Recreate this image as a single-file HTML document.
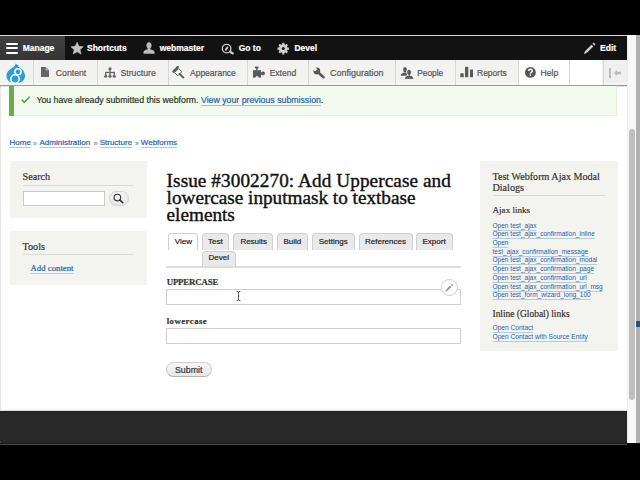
<!DOCTYPE html><html><head><meta charset="utf-8"><style>
html,body{margin:0;padding:0;width:640px;height:480px;overflow:hidden;background:#000;}
.t{position:absolute;white-space:nowrap;-webkit-text-stroke:0.2px currentColor;}
.b{position:absolute;box-sizing:border-box;}
svg{position:absolute;overflow:visible;}
</style></head><body>
<div class="b" style="left:0px;top:36px;width:627px;height:407px;background:#fff;"></div>
<div class="b" style="left:0px;top:86px;width:1px;height:325px;background:#e6e6e6;"></div>
<div class="b" style="left:0px;top:35px;width:636px;height:1px;background:#d9d9d9;"></div>
<div class="b" style="left:627px;top:35px;width:9px;height:408px;background:#f8f8f8;border-left:1px solid #ececec;"></div>
<div class="b" style="left:628.8px;top:129px;width:5.800000000000068px;height:271px;background:#bebebe;border-radius:3px;"></div>
<div class="b" style="left:636px;top:35px;width:4px;height:408px;background:#b0b0b0;"></div>
<div class="b" style="left:636px;top:321px;width:4px;height:6px;background:#23508a;"></div>
<div class="b" style="left:0px;top:36px;width:627px;height:24px;background:#121212;"></div>
<div class="b" style="left:0px;top:36px;width:65px;height:24px;background:linear-gradient(#404040,#353535);"></div>
<div class="b" style="left:5.5px;top:42.5px;width:12.5px;height:2.2px;background:#fff;border-radius:1px;"></div>
<div class="b" style="left:5.5px;top:47px;width:12.5px;height:2.2px;background:#fff;border-radius:1px;"></div>
<div class="b" style="left:5.5px;top:51.5px;width:12.5px;height:2.2px;background:#fff;border-radius:1px;"></div>
<div class="t" style="left:22.70px;top:44.30px;font-size:8.5px;line-height:8.5px;font-family:'Liberation Sans', sans-serif;font-weight:bold;color:#fff;">Manage</div>
<svg style="left:66px;top:38px" width="24" height="20" viewBox="0 0 24 20"><path d="M11.1 4.2 L12.9 8.3 L17.2 8.8 L14 11.7 L15 16 L11.1 13.8 L7.2 16 L8.2 11.7 L5 8.8 L9.3 8.3z" fill="#c4c4c4" stroke="#c4c4c4" stroke-width="0.6" stroke-linejoin="round"/></svg>
<div class="t" style="left:87.00px;top:44.30px;font-size:8.5px;line-height:8.5px;font-family:'Liberation Sans', sans-serif;font-weight:bold;color:#fff;">Shortcuts</div>
<svg style="left:143px;top:42px" width="12" height="12" viewBox="0 0 24 24"><path d="M12 0.5c3.3 0 5.2 2.8 5.2 6.2 0 2.7-1.1 5-2.6 6.1v1.6c3.8 1 8.2 2.8 8.4 5.2V23.5H1v-3.9c0.2-2.4 4.6-4.2 8.4-5.2v-1.6C7.9 11.7 6.8 9.400 6.8 6.700 6.8 3.300 8.700 0.5 12 0.5z" fill="#bbb"/></svg>
<div class="t" style="left:159.75px;top:44.30px;font-size:8.5px;line-height:8.5px;font-family:'Liberation Sans', sans-serif;font-weight:bold;color:#fff;">webmaster</div>
<svg style="left:216px;top:38px" width="24" height="20" viewBox="0 0 24 20"><circle cx="10.6" cy="10.6" r="4.3" fill="none" stroke="#c8c8c8" stroke-width="1.3"/><ellipse cx="10.6" cy="10.6" rx="1.1" ry="2.5" transform="rotate(35 10.6 10.6)" fill="#c8c8c8"/><path d="M14.2 13.8 L16.8 15.4" stroke="#c8c8c8" stroke-width="2.3" stroke-linecap="round"/></svg>
<div class="t" style="left:238.70px;top:44.30px;font-size:8.5px;line-height:8.5px;font-family:'Liberation Sans', sans-serif;font-weight:bold;color:#fff;">Go to</div>
<svg style="left:272px;top:38px" width="24" height="20" viewBox="0 0 24 20"><g fill="#cfcfcf"><circle cx="11.25" cy="10.6" r="4.3"/><rect x="10.2" y="4.8" width="2.1" height="2.5" rx="0.5" transform="rotate(0 11.25 10.6)"/><rect x="10.2" y="4.8" width="2.1" height="2.5" rx="0.5" transform="rotate(45 11.25 10.6)"/><rect x="10.2" y="4.8" width="2.1" height="2.5" rx="0.5" transform="rotate(90 11.25 10.6)"/><rect x="10.2" y="4.8" width="2.1" height="2.5" rx="0.5" transform="rotate(135 11.25 10.6)"/><rect x="10.2" y="4.8" width="2.1" height="2.5" rx="0.5" transform="rotate(180 11.25 10.6)"/><rect x="10.2" y="4.8" width="2.1" height="2.5" rx="0.5" transform="rotate(225 11.25 10.6)"/><rect x="10.2" y="4.8" width="2.1" height="2.5" rx="0.5" transform="rotate(270 11.25 10.6)"/><rect x="10.2" y="4.8" width="2.1" height="2.5" rx="0.5" transform="rotate(315 11.25 10.6)"/></g><circle cx="11.25" cy="10.6" r="1.5" fill="#121212"/></svg>
<div class="t" style="left:294.40px;top:44.30px;font-size:8.5px;line-height:8.5px;font-family:'Liberation Sans', sans-serif;font-weight:bold;color:#fff;">Devel</div>
<svg style="left:580px;top:40px" width="20" height="18" viewBox="0 0 20 18"><path d="M5.8 12.2 L12.4 5.6" stroke="#cfcfcf" stroke-width="2.6"/><path d="M13.4 4.6 L14.6 3.4" stroke="#cfcfcf" stroke-width="2.6"/><path d="M4.9 11.3 L6.7 13.1 L4 14z" fill="#cfcfcf"/></svg>
<div class="t" style="left:600.10px;top:44.30px;font-size:8.5px;line-height:8.5px;font-family:'Liberation Sans', sans-serif;font-weight:bold;color:#fff;">Edit</div>
<div class="b" style="left:0px;top:60px;width:627px;height:25px;background:#f2f2f0;"></div>
<div class="b" style="left:518px;top:60px;width:84px;height:25px;background:#fff;"></div>
<div class="b" style="left:602px;top:60px;width:25px;height:25px;background:#efefef;"></div>
<div class="b" style="left:0px;top:83px;width:627px;height:1px;background:rgba(255,255,255,0.6);"></div>
<div class="b" style="left:0px;top:84.6px;width:627px;height:1.4000000000000057px;background:#9c9c9a;"></div>
<div class="b" style="left:0px;top:86px;width:627px;height:1px;background:rgba(0,0,0,0.12);"></div>
<div class="b" style="left:33.4px;top:60px;width:1px;height:25px;background:#d8d8d6;"></div>
<div class="b" style="left:97.2px;top:60px;width:1px;height:25px;background:#d8d8d6;"></div>
<div class="b" style="left:168.2px;top:60px;width:1px;height:25px;background:#d8d8d6;"></div>
<div class="b" style="left:246.7px;top:60px;width:1px;height:25px;background:#d8d8d6;"></div>
<div class="b" style="left:308.2px;top:60px;width:1px;height:25px;background:#d8d8d6;"></div>
<div class="b" style="left:395px;top:60px;width:1px;height:25px;background:#d8d8d6;"></div>
<div class="b" style="left:454.5px;top:60px;width:1px;height:25px;background:#d8d8d6;"></div>
<div class="b" style="left:518.4px;top:60px;width:1px;height:25px;background:#d8d8d6;"></div>
<div class="b" style="left:569.4px;top:60px;width:1px;height:25px;background:#d8d8d6;"></div>
<div class="b" style="left:602.6px;top:60px;width:1px;height:25px;background:#d8d8d6;"></div>
<svg style="left:6px;top:62.5px" width="19.5" height="21" viewBox="0 0 39 42"><path d="M19.5 1.2 C21 3 23.5 4.2 25.5 5 L24 7.2 C31 10.5 38 16.5 38 26 C38 35 30 40.5 19.5 40.5 C9 40.5 1 35 1 26 C1 17 8 12.5 13 9.5 C16.5 7.5 19 5 19.5 1.2z" fill="#2a9fd8"/><circle cx="18" cy="32" r="8.4" fill="#2a9fd8" stroke="#fff" stroke-width="3.2"/><circle cx="24" cy="17.6" r="6.2" fill="#2a9fd8" stroke="#fff" stroke-width="3"/></svg>
<svg style="left:41px;top:67px" width="8" height="10" viewBox="0 0 8 10"><path d="M0 0 H5 L8 3 V10 H0z" fill="#666"/><path d="M5.2 0.3 V2.8 H7.7" fill="none" stroke="#f2f2f0" stroke-width="0.7"/></svg>
<div class="t" style="left:55.80px;top:68.51px;font-size:8.7px;line-height:8.7px;font-family:'Liberation Sans', sans-serif;font-weight:normal;color:#555;">Content</div>
<svg style="left:103.75px;top:67px" width="12" height="11" viewBox="0 0 24 22"><g fill="#666"><circle cx="12" cy="3.5" r="3.2"/><circle cx="3.5" cy="18.5" r="3.2"/><circle cx="12" cy="18.5" r="3.2"/><circle cx="20.5" cy="18.5" r="3.2"/><rect x="10.7" y="3" width="2.6" height="15"/><rect x="2.2" y="9.7" width="19.6" height="2.6"/><rect x="2.2" y="9.7" width="2.6" height="9"/><rect x="19.2" y="9.7" width="2.6" height="9"/></g></svg>
<div class="t" style="left:120.50px;top:68.51px;font-size:8.7px;line-height:8.7px;font-family:'Liberation Sans', sans-serif;font-weight:normal;color:#555;">Structure</div>
<svg style="left:170px;top:62px" width="20" height="20" viewBox="0 0 20 20"><path d="M4.6 10.6 L8.6 6.6 L11.8 9.8 L7.8 13.8z" fill="#fff" stroke="#5a5a5a" stroke-width="1"/><path d="M3.4 9.6 L7.8 5.2" stroke="#5a5a5a" stroke-width="2.4" stroke-linecap="round"/><path d="M9.6 12 L13.4 15.6" stroke="#5a5a5a" stroke-width="1.9" stroke-linecap="round"/></svg>
<div class="t" style="left:190.00px;top:68.51px;font-size:8.5px;line-height:8.5px;font-family:'Liberation Sans', sans-serif;font-weight:normal;color:#555;">Appearance</div>
<svg style="left:250px;top:62px" width="20" height="20" viewBox="0 0 20 20"><g fill="#5a5a5a"><rect x="5" y="4.6" width="3.6" height="1.8" rx="0.6"/><rect x="6.1" y="5.5" width="1.4" height="3"/><rect x="3" y="8.2" width="8" height="7.4"/><circle cx="13" cy="11.4" r="1.9"/><rect x="10.5" y="10.6" width="2" height="1.6"/></g><circle cx="7" cy="15.6" r="1.5" fill="#f2f2f0"/></svg>
<div class="t" style="left:269.70px;top:68.51px;font-size:8.5px;line-height:8.5px;font-family:'Liberation Sans', sans-serif;font-weight:normal;color:#555;">Extend</div>
<svg style="left:310px;top:62px" width="20" height="20" viewBox="0 0 20 20"><circle cx="6.8" cy="9" r="3.4" fill="#5a5a5a"/><circle cx="5" cy="7.2" r="1.7" fill="#f2f2f0"/><path d="M3.6 5.8 L6 8.2" stroke="#f2f2f0" stroke-width="2.2"/><path d="M8 10.2 L13.5 15.2" stroke="#5a5a5a" stroke-width="2.6" stroke-linecap="round"/></svg>
<div class="t" style="left:330.00px;top:68.51px;font-size:9px;line-height:9px;font-family:'Liberation Sans', sans-serif;font-weight:normal;color:#555;">Configuration</div>
<svg style="left:398px;top:62px" width="20" height="20" viewBox="0 0 20 20"><g fill="#5a5a5a"><ellipse cx="7" cy="7.6" rx="1.9" ry="2.7"/><path d="M2.6 13.8 C2.8 11.6 4.6 10.6 7 10.4 C8 10.4 8.6 10.6 9 10.8 V13.8z"/></g><g fill="#5a5a5a" stroke="#f2f2f0" stroke-width="0.8"><path d="M6.4 17.3 C6.6 14.6 8.6 13.4 10.4 13.2 C9.2 12.4 8.8 11.4 8.8 10.2 C8.8 8.4 9.8 7.4 11.1 7.4 C12.4 7.4 13.4 8.4 13.4 10.2 C13.4 11.4 13 12.4 11.8 13.2 C13.6 13.4 15.6 14.6 15.8 17.3z"/></g></svg>
<div class="t" style="left:417.20px;top:68.51px;font-size:8.4px;line-height:8.4px;font-family:'Liberation Sans', sans-serif;font-weight:normal;color:#555;">People</div>
<svg style="left:456px;top:62px" width="20" height="20" viewBox="0 0 20 20"><g fill="#5a5a5a"><rect x="4.3" y="11.3" width="3.4" height="4" rx="0.5"/><rect x="9" y="4.8" width="3.3" height="10.5" rx="0.5"/><rect x="14" y="7.5" width="3" height="7.8" rx="0.5"/></g></svg>
<div class="t" style="left:477.00px;top:68.51px;font-size:8.5px;line-height:8.5px;font-family:'Liberation Sans', sans-serif;font-weight:normal;color:#555;">Reports</div>
<svg style="left:524.6px;top:67.4px" width="10.8" height="10.8" viewBox="0 0 20 20"><circle cx="10" cy="10" r="10" fill="#555"/><path d="M6.6 7.6 C6.6 5.2 8.2 4.2 10.1 4.2 C12.1 4.2 13.5 5.5 13.5 7.2 C13.5 9.6 10.1 9.6 10.1 12.2" fill="none" stroke="#fff" stroke-width="2.7"/><rect x="8.7" y="13.6" width="2.8" height="2.7" fill="#fff"/></svg>
<div class="t" style="left:540.50px;top:68.51px;font-size:8.7px;line-height:8.7px;font-family:'Liberation Sans', sans-serif;font-weight:normal;color:#555;">Help</div>
<div class="b" style="left:608.8px;top:68px;width:2.2000000000000455px;height:9.5px;background:#bbb;"></div>
<svg style="left:614px;top:69.5px" width="7" height="6" viewBox="0 0 14 12"><path d="M0 6 L6 0 V3.5 H14 V8.5 H6 V12z" fill="#bbb"/></svg>
<div class="b" style="left:9px;top:86px;width:608px;height:30px;background:#f3f9ef;border:1px solid #e6eedd;border-top:none;"></div>
<div class="b" style="left:9px;top:86px;width:5px;height:30px;background:#6aab4c;"></div>
<svg style="left:21px;top:96px" width="9.5" height="7.5" viewBox="0 0 19 15"><path d="M1.5 7.5 L6.5 12.5 L17.5 1.5" fill="none" stroke="#5aa33c" stroke-width="3.4"/></svg>
<div class="t" style="left:36.40px;top:95.70px;font-size:8.75px;line-height:8.75px;font-family:'Liberation Sans', sans-serif;font-weight:normal;color:#283a24;">You have already submitted this webform. <span style="color:#2a61a6;text-decoration:underline;text-decoration-color:#9fbcd6;text-decoration-thickness:1px;text-underline-offset:1.5px;">View your previous submission</span>.</div>
<div class="t" style="left:9.50px;top:139.10px;font-size:8px;line-height:8px;font-family:'Liberation Sans', sans-serif;font-weight:normal;color:#2a61a6;"><span style="text-decoration:underline;text-decoration-color:#b3cbe0;text-decoration-thickness:1px;text-underline-offset:2px;">Home</span></div>
<div class="t" style="left:39.50px;top:139.10px;font-size:8px;line-height:8px;font-family:'Liberation Sans', sans-serif;font-weight:normal;color:#2a61a6;"><span style="text-decoration:underline;text-decoration-color:#b3cbe0;text-decoration-thickness:1px;text-underline-offset:2px;">Administration</span></div>
<div class="t" style="left:99.70px;top:139.10px;font-size:8px;line-height:8px;font-family:'Liberation Sans', sans-serif;font-weight:normal;color:#2a61a6;"><span style="text-decoration:underline;text-decoration-color:#b3cbe0;text-decoration-thickness:1px;text-underline-offset:2px;">Structure</span></div>
<div class="t" style="left:140.80px;top:139.10px;font-size:8px;line-height:8px;font-family:'Liberation Sans', sans-serif;font-weight:normal;color:#2a61a6;"><span style="text-decoration:underline;text-decoration-color:#b3cbe0;text-decoration-thickness:1px;text-underline-offset:2px;">Webforms</span></div>
<div class="t" style="left:33.00px;top:139.81px;font-size:7px;line-height:7px;font-family:'Liberation Sans', sans-serif;font-weight:normal;color:#999;">»</div>
<div class="t" style="left:93.60px;top:139.81px;font-size:7px;line-height:7px;font-family:'Liberation Sans', sans-serif;font-weight:normal;color:#999;">»</div>
<div class="t" style="left:135.00px;top:139.81px;font-size:7px;line-height:7px;font-family:'Liberation Sans', sans-serif;font-weight:normal;color:#999;">»</div>
<div class="b" style="left:9.5px;top:161px;width:137.5px;height:57px;background:#f3f4ef;"></div>
<div class="t" style="left:22.50px;top:171.82px;font-size:10.2px;line-height:10.2px;font-family:'Liberation Serif', serif;font-weight:normal;color:#333;">Search</div>
<div class="b" style="left:22.5px;top:184.5px;width:111.5px;height:1.0px;background:#d9dad3;"></div>
<div class="b" style="left:22.5px;top:191px;width:82.1px;height:15.300000000000011px;background:#fff;border:1px solid #c9c9c9;"></div>
<div class="b" style="left:108.5px;top:191.3px;width:20.5px;height:15.199999999999989px;background:linear-gradient(#f3f3f3,#e6e6e6);border:1px solid #d2d2d2;border-radius:8px;"></div>
<svg style="left:104px;top:188px" width="30" height="22" viewBox="0 0 30 22"><circle cx="13.4" cy="9.6" r="3.3" fill="none" stroke="#333" stroke-width="1.1"/><path d="M15.9 12.1 L18.7 14.6" stroke="#333" stroke-width="1.6" stroke-linecap="round"/></svg>
<div class="b" style="left:9.5px;top:230.5px;width:137.5px;height:54.5px;background:#f3f4ef;"></div>
<div class="t" style="left:22.50px;top:241.50px;font-size:10.2px;line-height:10.2px;font-family:'Liberation Serif', serif;font-weight:normal;color:#333;">Tools</div>
<div class="b" style="left:22.5px;top:253.8px;width:111.5px;height:1.0px;background:#d9dad3;"></div>
<div class="t" style="left:30.50px;top:264.00px;font-size:8.75px;line-height:8.75px;font-family:'Liberation Serif', serif;font-weight:normal;color:#2a61a6;"><span style="text-decoration:underline;text-decoration-color:#b3cbe0;text-decoration-thickness:1px;text-underline-offset:2px;">Add content</span></div>
<div class="t" style="left:166.60px;top:171.22px;font-size:19.2px;line-height:19.2px;font-family:'Liberation Serif', serif;font-weight:normal;color:#111;-webkit-text-stroke:0.4px #111;letter-spacing:0.09px;">Issue #3002270: Add Uppercase and</div>
<div class="t" style="left:166.60px;top:188.31px;font-size:19.2px;line-height:19.2px;font-family:'Liberation Serif', serif;font-weight:normal;color:#111;-webkit-text-stroke:0.4px #111;">lowercase inputmask to textbase</div>
<div class="t" style="left:166.60px;top:204.72px;font-size:19.2px;line-height:19.2px;font-family:'Liberation Serif', serif;font-weight:normal;color:#111;-webkit-text-stroke:0.4px #111;">elements</div>
<div class="b" style="left:168.1px;top:233.25px;width:30.400000000000006px;height:16.75px;background:#fff;border:1px solid #cfcfcf;border-bottom:none;border-radius:4px 4px 0 0;"></div>
<div class="b" style="left:201.9px;top:233.25px;width:27.5px;height:16.75px;background:#e9e9e9;border:1px solid #cfcfcf;border-bottom:none;border-radius:4px 4px 0 0;"></div>
<div class="b" style="left:233.4px;top:233.25px;width:39.99999999999997px;height:16.75px;background:#e9e9e9;border:1px solid #cfcfcf;border-bottom:none;border-radius:4px 4px 0 0;"></div>
<div class="b" style="left:276.6px;top:233.25px;width:31.899999999999977px;height:16.75px;background:#e9e9e9;border:1px solid #cfcfcf;border-bottom:none;border-radius:4px 4px 0 0;"></div>
<div class="b" style="left:312px;top:233.25px;width:43px;height:16.75px;background:#e9e9e9;border:1px solid #cfcfcf;border-bottom:none;border-radius:4px 4px 0 0;"></div>
<div class="b" style="left:358.75px;top:233.25px;width:53.75px;height:16.75px;background:#e9e9e9;border:1px solid #cfcfcf;border-bottom:none;border-radius:4px 4px 0 0;"></div>
<div class="b" style="left:415.75px;top:233.25px;width:37.14999999999998px;height:16.75px;background:#e9e9e9;border:1px solid #cfcfcf;border-bottom:none;border-radius:4px 4px 0 0;"></div>
<div class="b" style="left:201.9px;top:250.5px;width:33.69999999999999px;height:16.5px;background:#e9e9e9;border:1px solid #cfcfcf;border-bottom:none;border-radius:4px 4px 0 0;"></div>
<div class="b" style="left:166px;top:266.2px;width:294.8px;height:2.0px;background:#dcdcdc;"></div>
<div class="t" style="left:174.75px;top:238.01px;font-size:8px;line-height:8px;font-family:'Liberation Sans', sans-serif;font-weight:normal;color:#222;">View</div>
<div class="t" style="left:208.00px;top:238.01px;font-size:8px;line-height:8px;font-family:'Liberation Sans', sans-serif;font-weight:normal;color:#222;">Test</div>
<div class="t" style="left:240.40px;top:238.01px;font-size:8px;line-height:8px;font-family:'Liberation Sans', sans-serif;font-weight:normal;color:#222;">Results</div>
<div class="t" style="left:283.50px;top:238.01px;font-size:8px;line-height:8px;font-family:'Liberation Sans', sans-serif;font-weight:normal;color:#222;">Build</div>
<div class="t" style="left:318.75px;top:238.01px;font-size:8px;line-height:8px;font-family:'Liberation Sans', sans-serif;font-weight:normal;color:#222;">Settings</div>
<div class="t" style="left:365.00px;top:238.01px;font-size:8px;line-height:8px;font-family:'Liberation Sans', sans-serif;font-weight:normal;color:#222;">References</div>
<div class="t" style="left:422.50px;top:238.01px;font-size:8px;line-height:8px;font-family:'Liberation Sans', sans-serif;font-weight:normal;color:#222;">Export</div>
<div class="t" style="left:208.50px;top:254.31px;font-size:8px;line-height:8px;font-family:'Liberation Sans', sans-serif;font-weight:normal;color:#222;">Devel</div>
<div class="t" style="left:166.70px;top:277.71px;font-size:8.8px;line-height:8.8px;font-family:'Liberation Serif', serif;font-weight:bold;color:#333;letter-spacing:-0.15px;">UPPERCASE</div>
<div class="b" style="left:166.2px;top:289.2px;width:294.6px;height:15.800000000000011px;background:#fff;border:1px solid #d0d0d0;"></div>
<div class="t" style="left:166.70px;top:317.21px;font-size:8.8px;line-height:8.8px;font-family:'Liberation Serif', serif;font-weight:bold;color:#333;letter-spacing:0.45px;">lowercase</div>
<div class="b" style="left:166.2px;top:328.3px;width:294.6px;height:15.899999999999977px;background:#fff;border:1px solid #d0d0d0;"></div>
<div class="b" style="left:441px;top:279.3px;width:17px;height:17px;border-radius:50%;background:#fff;border:1px solid #cfcfcf;"></div>
<svg style="left:444px;top:283px" width="10" height="10" viewBox="0 0 20 20"><path d="M4.2 15.8 L13.4 6.6" stroke="#9a9a9a" stroke-width="4"/><path d="M15 5 L17 3" stroke="#9a9a9a" stroke-width="4"/><path d="M2.2 17.8 L3.4 16.6" stroke="#aaa" stroke-width="1.4"/></svg>
<svg style="left:235.7px;top:291px" width="5" height="10" viewBox="0 0 10 20"><path d="M1 1 H4 L5 2 L6 1 H9 M5 2 V18 M1 19 H4 L5 18 L6 19 H9 M3.5 10 H6.5" fill="none" stroke="#333" stroke-width="1.5"/></svg>
<div class="b" style="left:166.1px;top:362px;width:45.599999999999994px;height:14.600000000000023px;background:linear-gradient(#f7f7f7,#e6e6e6);border:1px solid #d0d0d0;border-bottom-color:#b4b4b4;border-radius:8px;"></div>
<div class="t" style="left:175.00px;top:365.60px;font-size:8.8px;line-height:8.8px;font-family:'Liberation Sans', sans-serif;font-weight:normal;color:#333;">Submit</div>
<div class="b" style="left:479.5px;top:160.5px;width:138.0px;height:190.3px;background:#f3f4ef;"></div>
<div class="t" style="left:492.50px;top:172.01px;font-size:10.1px;line-height:10.1px;font-family:'Liberation Serif', serif;font-weight:normal;color:#333;">Test Webform Ajax Modal</div>
<div class="t" style="left:492.50px;top:182.51px;font-size:10.1px;line-height:10.1px;font-family:'Liberation Serif', serif;font-weight:normal;color:#333;">Dialogs</div>
<div class="b" style="left:492.5px;top:194.5px;width:112.0px;height:1.0px;background:#d9dad3;"></div>
<div class="t" style="left:492.50px;top:206.00px;font-size:9.1px;line-height:9.1px;font-family:'Liberation Serif', serif;font-weight:normal;color:#333;">Ajax links</div>
<div class="t" style="left:492.50px;top:222.71px;font-size:6.55px;line-height:6.55px;font-family:'Liberation Sans', sans-serif;font-weight:normal;color:#2a61a6;-webkit-text-stroke:0;"><span style="text-decoration:underline;text-decoration-color:#b3cbe0;text-decoration-thickness:1px;text-underline-offset:2px;">Open test_ajax</span></div>
<div class="t" style="left:492.50px;top:231.31px;font-size:6.55px;line-height:6.55px;font-family:'Liberation Sans', sans-serif;font-weight:normal;color:#2a61a6;-webkit-text-stroke:0;"><span style="text-decoration:underline;text-decoration-color:#b3cbe0;text-decoration-thickness:1px;text-underline-offset:2px;">Open test_ajax_confirmation_inline</span></div>
<div class="t" style="left:492.50px;top:240.00px;font-size:6.55px;line-height:6.55px;font-family:'Liberation Sans', sans-serif;font-weight:normal;color:#2a61a6;-webkit-text-stroke:0;"><span style="text-decoration:underline;text-decoration-color:#b3cbe0;text-decoration-thickness:1px;text-underline-offset:2px;">Open</span></div>
<div class="t" style="left:492.50px;top:248.71px;font-size:6.55px;line-height:6.55px;font-family:'Liberation Sans', sans-serif;font-weight:normal;color:#2a61a6;-webkit-text-stroke:0;"><span style="text-decoration:underline;text-decoration-color:#b3cbe0;text-decoration-thickness:1px;text-underline-offset:2px;">test_ajax_confirmation_message</span></div>
<div class="t" style="left:492.50px;top:257.41px;font-size:6.55px;line-height:6.55px;font-family:'Liberation Sans', sans-serif;font-weight:normal;color:#2a61a6;-webkit-text-stroke:0;"><span style="text-decoration:underline;text-decoration-color:#b3cbe0;text-decoration-thickness:1px;text-underline-offset:2px;">Open test_ajax_confirmation_modal</span></div>
<div class="t" style="left:492.50px;top:266.00px;font-size:6.55px;line-height:6.55px;font-family:'Liberation Sans', sans-serif;font-weight:normal;color:#2a61a6;-webkit-text-stroke:0;"><span style="text-decoration:underline;text-decoration-color:#b3cbe0;text-decoration-thickness:1px;text-underline-offset:2px;">Open test_ajax_confirmation_page</span></div>
<div class="t" style="left:492.50px;top:274.81px;font-size:6.55px;line-height:6.55px;font-family:'Liberation Sans', sans-serif;font-weight:normal;color:#2a61a6;-webkit-text-stroke:0;"><span style="text-decoration:underline;text-decoration-color:#b3cbe0;text-decoration-thickness:1px;text-underline-offset:2px;">Open test_ajax_confirmation_url</span></div>
<div class="t" style="left:492.50px;top:283.50px;font-size:6.55px;line-height:6.55px;font-family:'Liberation Sans', sans-serif;font-weight:normal;color:#2a61a6;-webkit-text-stroke:0;"><span style="text-decoration:underline;text-decoration-color:#b3cbe0;text-decoration-thickness:1px;text-underline-offset:2px;">Open test_ajax_confirmation_url_msg</span></div>
<div class="t" style="left:492.50px;top:292.00px;font-size:6.55px;line-height:6.55px;font-family:'Liberation Sans', sans-serif;font-weight:normal;color:#2a61a6;-webkit-text-stroke:0;"><span style="text-decoration:underline;text-decoration-color:#b3cbe0;text-decoration-thickness:1px;text-underline-offset:2px;">Open test_form_wizard_long_100</span></div>
<div class="t" style="left:492.50px;top:309.60px;font-size:9.45px;line-height:9.45px;font-family:'Liberation Serif', serif;font-weight:normal;color:#333;">Inline (Global) links</div>
<div class="t" style="left:492.50px;top:325.30px;font-size:6.6px;line-height:6.6px;font-family:'Liberation Sans', sans-serif;font-weight:normal;color:#2a61a6;-webkit-text-stroke:0;"><span style="text-decoration:underline;text-decoration-color:#b3cbe0;text-decoration-thickness:1px;text-underline-offset:2px;">Open Contact</span></div>
<div class="t" style="left:492.50px;top:334.01px;font-size:6.6px;line-height:6.6px;font-family:'Liberation Sans', sans-serif;font-weight:normal;color:#2a61a6;-webkit-text-stroke:0;"><span style="text-decoration:underline;text-decoration-color:#b3cbe0;text-decoration-thickness:1px;text-underline-offset:2px;">Open Contact with Source Entity</span></div>
<div class="b" style="left:0px;top:411px;width:627px;height:33px;background:#282828;border-top:1px solid #1d1d1d;border-bottom:1px solid #1c1c1c;border-radius:0 0 0 3px;"></div>
<div class="b" style="left:0px;top:444px;width:627px;height:1px;background:#4a4a4a;"></div>
<div class="b" style="left:0px;top:409px;width:627px;height:2px;background:linear-gradient(#fff,#d8d8d8);"></div>
</body></html>
